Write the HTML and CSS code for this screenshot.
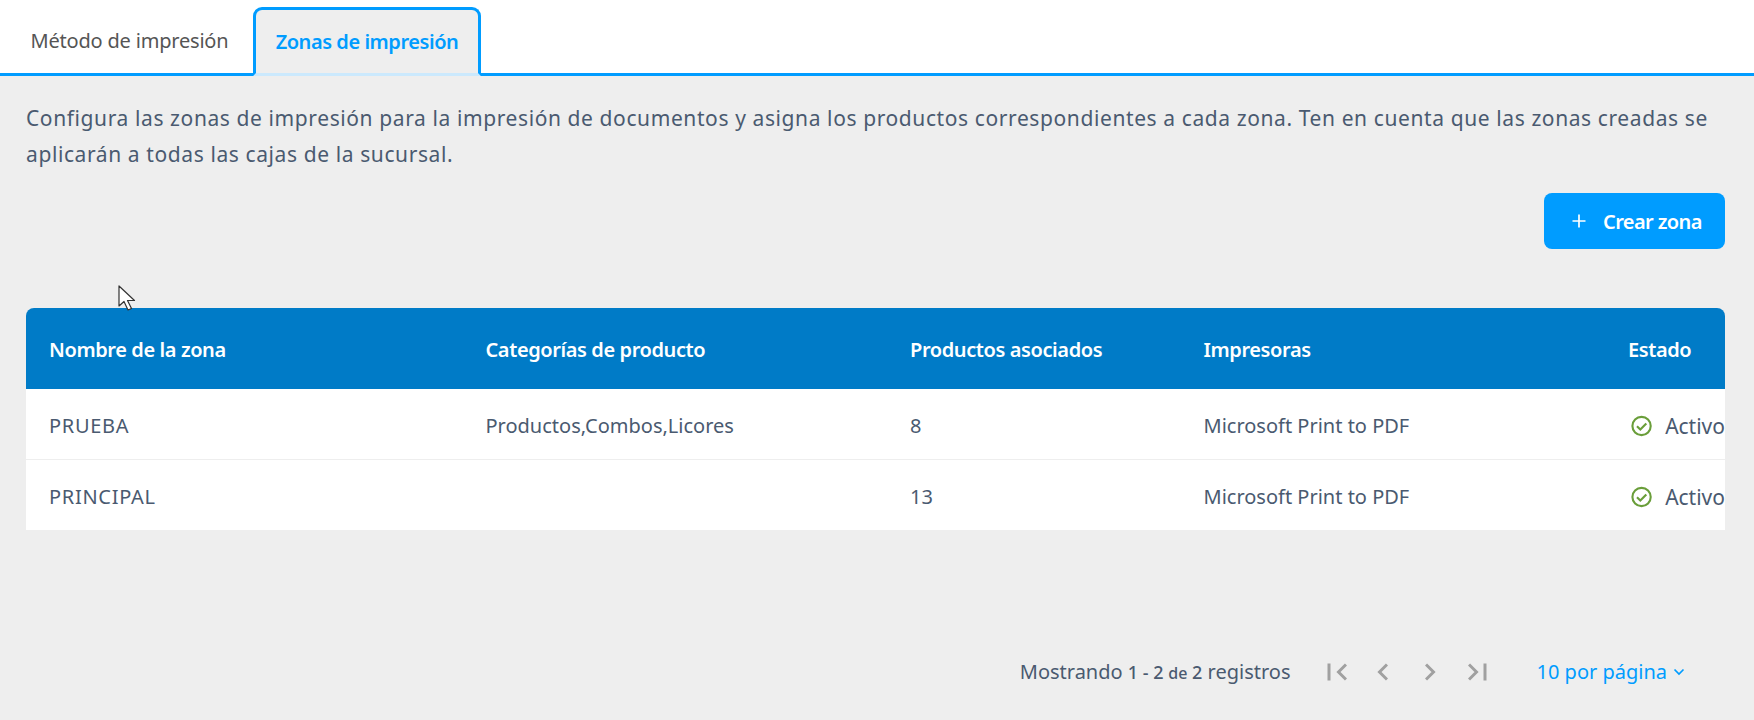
FILE: index.html
```html
<!DOCTYPE html>
<html lang="es">
<head>
<meta charset="utf-8">
<title>Zonas de impresión</title>
<link rel="stylesheet" href="styles.css">
</head>
<body>
<nav class="tabs">
  <div class="tab">Método de impresión</div>
  <div class="tab tab-active">Zonas de impresión</div>
</nav>
<main class="content">
  <p class="intro">Configura las zonas de impresión para la impresión de documentos y asigna los productos correspondientes a cada zona. Ten en cuenta que las zonas creadas se aplicarán a todas las cajas de la sucursal.</p>
  <div class="actions">
    <button class="btn-primary"><svg class="plus" width="16" height="16" viewBox="0 0 16 16"><path d="M8 1.500v13M1.500 8h13" stroke="#fff" stroke-width="1.700" fill="none"/></svg>Crear zona</button>
  </div>
  <div class="table">
    <div class="row head">
      <div>Nombre de la zona</div><div>Categorías de producto</div><div>Productos asociados</div><div>Impresoras</div><div>Estado</div>
    </div>
    <div class="row body-row">
      <div class="upper">PRUEBA</div><div>Productos,Combos,Licores</div><div>8</div><div>Microsoft Print to PDF</div>
      <div class="status"><svg width="24" height="24" viewBox="0 0 24 24"><circle cx="12" cy="12" r="10.400" fill="none" stroke="#6a9e3a" stroke-width="2.400"/><path d="M6.800 12.300l3.800 3.800 6.800-7" fill="none" stroke="#6a9e3a" stroke-width="2.400"/></svg><span>Activo</span></div>
    </div>
    <div class="row body-row">
      <div class="upper">PRINCIPAL</div><div></div><div>13</div><div>Microsoft Print to PDF</div>
      <div class="status"><svg width="24" height="24" viewBox="0 0 24 24"><circle cx="12" cy="12" r="10.400" fill="none" stroke="#6a9e3a" stroke-width="2.400"/><path d="M6.800 12.300l3.800 3.800 6.800-7" fill="none" stroke="#6a9e3a" stroke-width="2.400"/></svg><span>Activo</span></div>
    </div>
  </div>
  <div class="pager">
    <span class="count">Mostrando <span class="nums">1 - 2 <small>de</small> 2</span> registros</span>
    <div class="pager-icons">
      <svg class="pg-first" width="20" height="18" viewBox="0 0 20 18"><path d="M2 0.500v17M19 1.500L11.500 9l7.500 7.500" fill="none" stroke="#a0a0a0" stroke-width="3"/></svg>
      <svg class="pg-prev" width="11" height="18" viewBox="0 0 11 18"><path d="M10 1.500L2.500 9l7.500 7.500" fill="none" stroke="#a0a0a0" stroke-width="3"/></svg>
      <svg class="pg-next" width="11" height="18" viewBox="0 0 11 18"><path d="M1 1.500L8.500 9 1 16.500" fill="none" stroke="#a0a0a0" stroke-width="3"/></svg>
      <svg class="pg-last" width="19" height="18" viewBox="0 0 19 18"><path d="M17 0.500v17M1 1.500L8.500 9 1 16.500" fill="none" stroke="#a0a0a0" stroke-width="3"/></svg>
    </div>
    <span class="per-page">10 por página<svg width="12" height="8" viewBox="0 0 12 8"><path d="M1.500 1.500L6 6l4.500-4.500" fill="none" stroke="#009cff" stroke-width="1.700"/></svg></span>
  </div>
</main>
<svg class="cursor" width="19" height="27" viewBox="0 0 19 27"><path d="M1 1v20l5-4.500 4 8.500 3.500-1.500-4-8h7z" fill="#fff" stroke="#333" stroke-width="1.200" stroke-linejoin="round"/></svg>
</body>
</html>
```
FILE: styles.css
```css
* { box-sizing: border-box; }
html, body { margin: 0; height: 100%; }
body { position: relative; background: #eee; color: #4a5a70; font-family: "Noto Sans", "Open Sans", sans-serif; font-size: 20px; overflow: hidden; }
.tabs { display: flex; height: 76px; background: #fff; border-bottom: 3px solid #009cff; padding-top: 7px; }
.tab { width: 253px; height: 69px; display: flex; align-items: center; justify-content: center; color: #555; padding: 0 0 3px 6px; letter-spacing: -0.2px; }
.tab-active { width: 228px; height: 69px; padding: 0; background: #eee; color: #009cff; font-weight: 600; letter-spacing: -0.45px; border: 3px solid #009cff; border-bottom-color: #cbe9fd; border-radius: 9px 9px 0 0; }
.content { padding: 24px 29px 0 26px; }
.intro { margin: 0; font-size: 21px; letter-spacing: 0.6px; line-height: 36px; }
.actions { display: flex; justify-content: flex-end; margin-top: 21px; }
.btn-primary { display: flex; align-items: center; gap: 16px; height: 56px; width: 181px; padding: 0 0 0 27px; background: #009cff; color: #fff; border: 0; border-radius: 8px; font: 600 20px "Noto Sans", sans-serif; letter-spacing: -0.6px; white-space: nowrap; }
.table { margin-top: 59px; overflow: hidden; }
.row { display: grid; grid-template-columns: 436.500px 424.500px 293.500px 424.500px 1fr; padding-left: 23px; white-space: nowrap; }
.head { height: 81px; align-items: center; padding-top: 2px; background: #007bc7; color: #fff; font-weight: 600; letter-spacing: -0.4px; border-radius: 8px 8px 0 0; }
.body-row { height: 71px; align-items: center; padding-top: 3px; background: #fff; border-bottom: 1px solid #eee; }
.upper { letter-spacing: 0.7px; }
.status { display: flex; align-items: center; gap: 13px; padding-left: 3px; overflow: hidden; font-size: 21px; }
.pager { display: flex; align-items: center; justify-content: flex-end; margin-top: 127px; padding-right: 40px; }
.nums { font-size: 18px; font-weight: 500; }
.nums small { font-size: 16px; }
.pager-icons { display: flex; align-items: center; margin: 0 50px 0 36px; }
.pg-prev { margin-left: 30px; }
.pg-next { margin-left: 37px; }
.pg-last { margin-left: 32px; }
.per-page { display: flex; align-items: center; gap: 6px; color: #009cff; }
.cursor { position: absolute; left: 118px; top: 285px; }
```
